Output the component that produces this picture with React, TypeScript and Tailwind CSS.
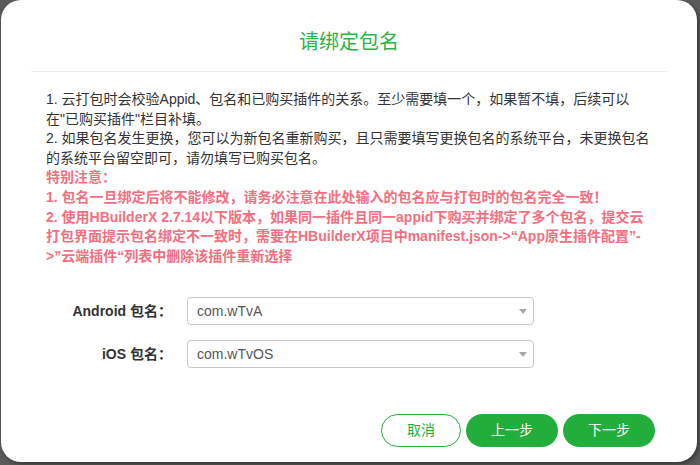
import { ChevronDown } from 'lucide-react'

const font = { fontFamily: '"Liberation Sans", "Noto Sans CJK SC", sans-serif' }

const introLines = [
  '1. 云打包时会校验Appid、包名和已购买插件的关系。至少需要填一个，如果暂不填，后续可以',
  '在"已购买插件"栏目补填。',
  '2. 如果包名发生更换，您可以为新包名重新购买，且只需要填写更换包名的系统平台，未更换包名',
  '的系统平台留空即可，请勿填写已购买包名。',
]

const warnLines = [
  '特别注意：',
  '1. 包名一旦绑定后将不能修改，请务必注意在此处输入的包名应与打包时的包名完全一致！',
  '2. 使用HBuilderX 2.7.14以下版本，如果同一插件且同一appid下购买并绑定了多个包名，提交云',
  '打包界面提示包名绑定不一致时，需要在HBuilderX项目中manifest.json->“App原生插件配置”-',
  '>”云端插件“列表中删除该插件重新选择',
]

function PackageSelect({ label, value }: { label: string; value: string }) {
  return (
    <div className="flex items-center">
      <div className="w-[126px] text-right text-[14px] font-bold text-[#333]">{label}</div>
      <div className="ml-[15px] flex h-[28px] w-[347px] items-center justify-between rounded-[4px] border border-[#c8c8c8] pl-[9px] pr-[6px]">
        <span className="text-[14px] text-[#555]">{value}</span>
        <span className="h-0 w-0 border-x-[4px] border-t-[5px] border-x-transparent border-t-[#a8a8a8]" />
      </div>
    </div>
  )
}

export default function App() {
  return (
    <div className="h-[465px] w-[700px] overflow-hidden bg-[#5a5a5a]" style={font}>
      <div className="ml-[1px] flex h-[462px] w-[696px] flex-col rounded-[20px] bg-white shadow-[2px_2px_4px_rgba(0,0,0,0.4)]">
        {/* Header */}
        <div className="mx-[30px] flex h-[72px] items-center justify-center border-b border-[#ececec] pt-[12px]">
          <h2 className="text-[20px] leading-[20px] text-[#2db445]">请绑定包名</h2>
        </div>

        {/* Notice */}
        <div className="px-[45px] pt-[18px] text-[14px] leading-[19.6px]">
          {introLines.map((line) => (
            <p key={line} className="whitespace-nowrap text-[#333]">
              {line}
            </p>
          ))}
          {warnLines.map((line) => (
            <p key={line} className="whitespace-nowrap font-bold text-[#f2707f]">
              {line}
            </p>
          ))}
        </div>

        {/* Form */}
        <div className="mt-[31px] flex flex-col gap-[15px] pl-[45px]">
          <PackageSelect label="Android 包名：" value="com.wTvA" />
          <PackageSelect label="iOS 包名：" value="com.wTvOS" />
        </div>

        {/* Actions */}
        <div className="mt-[46px] flex justify-end gap-[5px] pr-[42px]">
          <button className="h-[33px] w-[80px] rounded-full border border-[#23ad3a] text-[14px] text-[#23ad3a]">
            取消
          </button>
          <button className="h-[33px] w-[92px] rounded-full bg-[#23ad3a] text-[14px] text-white">上一步</button>
          <button className="h-[33px] w-[92px] rounded-full bg-[#23ad3a] text-[14px] text-white">下一步</button>
        </div>
      </div>
    </div>
  )
}
